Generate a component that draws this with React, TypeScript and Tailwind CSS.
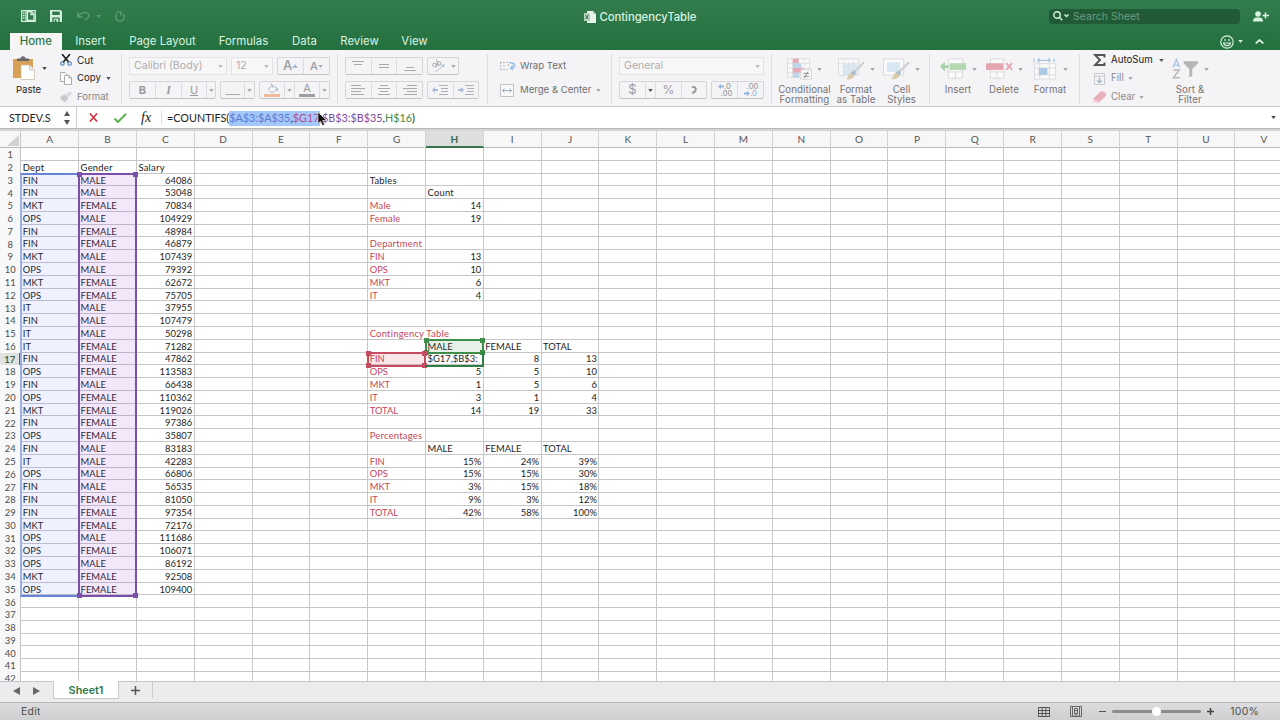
import type { ReactNode } from "react";
import clsx from "clsx";

const GUTTER_W = 21.3;
const COL_W = 57.82;
const ROW_H = 12.795;
const COLUMNS = "ABCDEFGHIJKLMNOPQRSTUV".split("");
const ROWS = Array.from({ length: 42 }, (_, i) => i + 1);

const employees: [string, string, number][] = [
  ["FIN", "MALE", 64086],
  ["FIN", "MALE", 53048],
  ["MKT", "FEMALE", 70834],
  ["OPS", "MALE", 104929],
  ["FIN", "FEMALE", 48984],
  ["FIN", "FEMALE", 46879],
  ["MKT", "MALE", 107439],
  ["OPS", "MALE", 79392],
  ["MKT", "FEMALE", 62672],
  ["OPS", "FEMALE", 75705],
  ["IT", "MALE", 37955],
  ["FIN", "MALE", 107479],
  ["IT", "MALE", 50298],
  ["IT", "FEMALE", 71282],
  ["FIN", "FEMALE", 47862],
  ["OPS", "FEMALE", 113583],
  ["FIN", "MALE", 66438],
  ["OPS", "FEMALE", 110362],
  ["MKT", "FEMALE", 119026],
  ["FIN", "FEMALE", 97386],
  ["OPS", "FEMALE", 35807],
  ["FIN", "MALE", 83183],
  ["IT", "MALE", 42283],
  ["OPS", "MALE", 66806],
  ["FIN", "MALE", 56535],
  ["FIN", "FEMALE", 81050],
  ["FIN", "FEMALE", 97354],
  ["MKT", "FEMALE", 72176],
  ["OPS", "MALE", 111686],
  ["OPS", "FEMALE", 106071],
  ["OPS", "MALE", 86192],
  ["MKT", "FEMALE", 92508],
  ["OPS", "FEMALE", 109400],
];

// columns G..J of the summary area, by row
const summary: Record<number, string[]> = {
  3: ["Tables"],
  4: ["", "Count"],
  5: ["Male", "14"],
  6: ["Female", "19"],
  8: ["Department"],
  9: ["FIN", "13"],
  10: ["OPS", "10"],
  11: ["MKT", "6"],
  12: ["IT", "4"],
  15: ["Contingency Table"],
  16: ["", "MALE", "FEMALE", "TOTAL"],
  17: ["FIN", "$G17,$B$3:", "8", "13"],
  18: ["OPS", "5", "5", "10"],
  19: ["MKT", "1", "5", "6"],
  20: ["IT", "3", "1", "4"],
  21: ["TOTAL", "14", "19", "33"],
  23: ["Percentages"],
  24: ["", "MALE", "FEMALE", "TOTAL"],
  25: ["FIN", "15%", "24%", "39%"],
  26: ["OPS", "15%", "15%", "30%"],
  27: ["MKT", "3%", "15%", "18%"],
  28: ["IT", "9%", "3%", "12%"],
  29: ["TOTAL", "42%", "58%", "100%"],
};

function cellValue(row: number, col: number): string {
  if (col < 3) {
    if (row === 2) return ["Dept", "Gender", "Salary"][col];
    const employee = employees[row - 3];
    return employee ? String(employee[col]) : "";
  }
  return summary[row]?.[col - 6] ?? "";
}

function Caret({ className = "text-[#777]" }: { className?: string }) {
  return (
    <svg viewBox="0 0 6 4" className={clsx("h-[3px] w-[5px] shrink-0", className)}>
      <path d="M0 0h6L3 4z" fill="currentColor" />
    </svg>
  );
}

function TitleBar() {
  return (
    <div className="flex h-8 items-center">
      <div className="flex w-[400px] items-center pl-[21px] text-[#d3f0dc]">
        <svg viewBox="0 0 15 12" className="h-3 w-[15px]" fill="none" stroke="currentColor" strokeWidth="1.3">
          <path d="M.7.7h13.6v10.6H.7zM5 1v10M2 3h1.6M2 5.500h1.600M2 8h1.600" />
          <path d="M6.500 1.500h4l2.500 2.500v6.500h-6.500z" fill="#33774b" />
          <path d="M10 1v3.500h3" />
        </svg>
        <svg viewBox="0 0 13 13" className="ml-[14px] h-3 w-3" fill="currentColor">
          <path fillRule="evenodd" d="M0 0h11.500L13 1.500V13H0zM2.500 1.500v4h8v-4zM2.500 8v5h1.500V9.500h5V13h1.500V8zM5 10.500h2V13H5z" />
        </svg>
        <svg viewBox="0 0 14 10" className="ml-[15px] h-[10px] w-[13px] text-[#5c9b70]" fill="none" stroke="currentColor" strokeWidth="1.6">
          <path d="M1 1v5h5M1.300 5.600C4 1 9.500 0 12 2.500c2 2 .5 4.500-3.500 7" />
        </svg>
        <Caret className="ml-[6px] text-[#5c9b70]" />
        <svg viewBox="0 0 12 12" className="ml-[13px] h-[11px] w-[12px] text-[#5c9b70]" fill="none" stroke="currentColor" strokeWidth="1.6">
          <path d="M3 2.800A4.600 4.600 0 1 0 9.500 3.300M2.500 1h4.500v4" />
        </svg>
      </div>
      <div className="flex w-[480px] items-center justify-center gap-1 pt-[2px] text-[11.300px] font-medium text-[#d9f3e1]">
        <svg viewBox="0 0 12 12" className="mb-px h-3 w-3">
          <path d="M3 0h6l3 3v9H3z" fill="#e6f5ea" />
          <path d="M9 0v3h3" fill="#a6cab2" />
          <path d="M0 2h6v8H0z" fill="#b3d0bc" />
          <path d="M1.500 4l3 4M4.500 4l-3 4" stroke="#3d7c52" />
        </svg>
        <span className="-tracking-[0.050px]">ContingencyTable</span>
      </div>
      <div className="flex flex-1 items-center justify-end pr-[11px] text-[#d9f3e1]">
        <div className="flex h-[15px] w-[191px] items-center rounded-sm bg-[#215b36] pl-1">
          <svg viewBox="0 0 17 10" className="h-[10px] w-[17px]" fill="none" stroke="currentColor" strokeWidth="1.4">
            <circle cx="4" cy="4" r="3.200" />
            <path d="M6.300 6.300l3 3M11.500 3.500l2 2 2-2" />
          </svg>
          <span className="ml-[3px] pt-px text-[10.400px] tracking-[0.080px] text-[#6f9b7d]">Search Sheet</span>
        </div>
        <svg viewBox="0 0 16 11" className="ml-[13px] h-[11px] w-4" fill="currentColor">
          <circle cx="5" cy="3" r="2.800" />
          <path d="M0 10.500C0 7 2 6.500 5 6.500s5 .5 5 4zM11.700 1.500h1.600v2.200H16v1.600h-2.700v2.200h-1.600V5.300H9.500V3.700h2.200z" />
        </svg>
      </div>
    </div>
  );
}

function RibbonTabs() {
  return (
    <div className="flex h-[18px] items-center pt-px pl-[10px] text-[11.400px] text-[#d9f3e1]">
      <div className="flex h-[18px] w-[51.500px] items-center justify-center bg-[#f6f5f6] font-medium text-[#2c7447]">Home</div>
      <div className="w-[58px] text-center">Insert</div>
      <div className="w-[86px] text-center">Page Layout</div>
      <div className="w-[76px] text-center">Formulas</div>
      <div className="w-[46px] text-center">Data</div>
      <div className="w-[64px] text-center">Review</div>
      <div className="w-[46px] text-center">View</div>
      <div className="flex flex-1 items-center justify-end pr-4">
        <svg viewBox="0 0 14 14" className="h-[14px] w-[14px]" fill="none" stroke="currentColor" strokeWidth="1.2">
          <circle cx="7" cy="7" r="6.200" />
          <path d="M3.500 8c1 3.500 6 3.500 7 0zM5 4v2M9 4v2" />
        </svg>
        <Caret className="ml-1" />
        <svg viewBox="0 0 9 5" className="ml-[12px] h-[5px] w-[9px]" fill="none" stroke="currentColor" strokeWidth="1.700">
          <path d="M.7 4.500l3.800-3.500 3.800 3.500" />
        </svg>
      </div>
    </div>
  );
}

function Box({ className, children }: { className?: string; children?: ReactNode }) {
  return (
    <div className={clsx("flex h-[18px] items-stretch divide-x divide-[#dddcde] rounded-[2px] border border-[#d6d5d7] border-b-[#c4c3c6] bg-[#f4f3f5] text-[#9b9b9e]", className)}>
      {children}
    </div>
  );
}

function Cell({ className = "flex-1", children }: { className?: string; children?: ReactNode }) {
  return <div className={clsx("flex items-center justify-center", className)}>{children}</div>;
}

function Select({ className, label }: { className: string; label: string }) {
  return (
    <div className={clsx("flex h-[18px] items-center justify-between border border-[#e3e2e4] bg-[#f8f7f8] pr-[3px] pl-1 text-[10.600px] text-[#aeadb0]", className)}>
      <span className="whitespace-nowrap">{label}</span>
      <Caret className="text-[#b5b4b7]" />
    </div>
  );
}

function Lines({ d }: { d: string }) {
  return (
    <svg viewBox="0 0 16 12" className="h-3 w-4" fill="none" stroke="#a9a9ac">
      <path d={d} />
    </svg>
  );
}

function Group({ className, children }: { className: string; children: ReactNode }) {
  return (
    <div className={clsx("relative shrink-0 after:absolute after:top-1 after:right-0 after:h-[50px] after:w-px after:bg-[#dedddf]", className)}>
      {children}
    </div>
  );
}

function BigButton({ className, icon, label, sub }: { className: string; icon: ReactNode; label: string; sub?: string }) {
  return (
    <div className={clsx("flex flex-col items-center text-[9.700px] leading-[9.600px] tracking-[0.080px] whitespace-nowrap text-[#747476]", className)}>
      <div className="mb-[5px] flex h-[22px] items-center gap-[5px]">
        {icon}
        <Caret className="text-[#a5a5a7]" />
      </div>
      <span>{label}</span>
      {sub && <span>{sub}</span>}
    </div>
  );
}

function BrushTable({ filled }: { filled?: boolean }) {
  return (
    <svg viewBox="0 0 28 22" className="h-[22px] w-[27px]" fill="none">
      <path d="M.5.500h21v17H.5z" fill="#fafafa" stroke="#d8d9db" />
      <path d={filled ? "M4 4h14v10H4z" : "M5 5h15v12H5z"} fill="#d9e7f3" />
      {!filled && <path d="M1 5h20M1 9h20M1 13h20M6 1v16M11 1v16M16 1v16" stroke="#dde1e5" strokeWidth=".7" />}
      <path d="M27 4L16 15" stroke="#cfcfd2" strokeWidth="2.200" />
      <path d="M14.500 15c2 0 3 1.500 2.500 3-.8 2.800-4 4-9 3.500 2-.8 2-2 2.800-3.800.8-1.700 1.900-2.700 3.700-2.700z" fill="#d9cba9" />
      <path d="M13 14.500l3.500-2 2.500 3-2 2z" fill="#a9bdd2" />
    </svg>
  );
}

function Ribbon() {
  return (
    <div className="flex h-[57px] border-b border-[#c9c8ca] bg-[#f4f3f5] text-[10px] text-[#222]">
      <Group className="flex w-[122px]">
        <div className="flex w-[58px] flex-col items-center pt-[6px]">
          <div className="flex h-6 w-full items-center gap-[7px] pl-[13px]">
            <svg viewBox="0 0 22 24" className="h-6 w-[22px]">
              <path d="M0 3h20v19H0z" fill="#d8a153" />
              <path d="M4 5V2.500h3.500C8-.500 12-.500 12.500 2.500H16V5z" fill="#66676b" />
              <path d="M8 9h8.500l5 5v9.500H8z" fill="#fff" stroke="#c9b9a4" strokeWidth=".7" />
              <path d="M16.500 9v5h5" fill="#e8e8e8" stroke="#bbb" strokeWidth=".7" />
            </svg>
            <Caret className="text-[#444]" />
          </div>
          <span className="mt-[3px] pr-px text-[9.600px]">Paste</span>
        </div>
        <div className="flex flex-col pt-px pl-[2px]">
          <div className="flex h-[18px] items-center gap-[5px]">
            <svg viewBox="0 0 12 12" className="h-3 w-3" fill="none">
              <path d="M2 0l7 8.500M10 0L3 8.500" stroke="#222" strokeWidth="1.700" />
              <circle cx="2.400" cy="9.500" r="1.800" stroke="#4b80bc" strokeWidth="1.100" />
              <circle cx="9.600" cy="9.500" r="1.800" stroke="#4b80bc" strokeWidth="1.100" />
            </svg>
            Cut
          </div>
          <div className="flex h-[19px] items-center gap-[5px] text-[9.600px]">
            <svg viewBox="0 0 12 13" className="h-[13px] w-3" fill="#fafafa" stroke="#a5a5a8" strokeWidth=".9">
              <path d="M.500.500h4.500l2 2v7H.500z" />
              <path d="M4.500 3.500h4.500L11.500 6v6.500h-7zM9 3.500V6h2.500" />
            </svg>
            Copy
            <Caret className="text-[#555]" />
          </div>
          <div className="flex h-[18px] items-center gap-[5px] text-[9.600px] text-[#88888a]">
            <svg viewBox="0 0 13 12" className="h-3 w-3">
              <path d="M0 6l5-3 4 4-3 4.500C3 11 1 9 0 6z" fill="#c8c7ca" />
              <path d="M6 3l5-3 2 2-3.500 4.500z" fill="#dadadd" />
            </svg>
            Format
          </div>
        </div>
      </Group>

      <Group className="flex w-[216px] flex-col gap-[6px] pt-[7px] pl-[7px]">
        <div className="flex gap-1">
          <Select className="w-[98px]" label="Calibri (Body)" />
          <Select className="w-[42px]" label="12" />
          <Box className="w-[53px]">
            <Cell>
              <span className="text-[13px] font-medium">A</span>
              <svg viewBox="0 0 6 4" className="h-1 w-[6px]"><path d="M0 4h6L3 0z" fill="#a9bbd6" /></svg>
            </Cell>
            <Cell>
              <span className="text-[11px] font-medium">A</span>
              <Caret className="text-[#aab0bb]" />
            </Cell>
          </Box>
        </div>
        <div className="flex gap-1">
          <Box className="w-[87px] text-[11px]">
            <Cell className="w-[26px] font-bold">B</Cell>
            <Cell className="w-[26px] font-['Liberation_Serif',serif] text-[12px] font-bold italic">I</Cell>
            <Cell className="w-[25px] underline">U</Cell>
            <Cell><Caret className="text-[#aaa]" /></Cell>
          </Box>
          <Box className="w-[35px]">
            <Cell className="w-[24px]"><Lines d="M1 10.500h14" /></Cell>
            <Cell><Caret className="text-[#aaa]" /></Cell>
          </Box>
          <Box className="w-[71px]">
            <Cell className="w-[25px]">
              <svg viewBox="0 0 16 16" className="h-4 w-4">
                <path d="M0 12h16v3H0z" fill="#efb99b" />
                <path d="M4 7l5-4 4 4-5 4zM7 1l2 5" fill="#f7f7f7" stroke="#b0bccb" />
                <path d="M12 5c2 1 2.500 3 2 5l-2-2z" fill="#a9c3df" />
              </svg>
            </Cell>
            <Cell className="w-[10px]"><Caret className="text-[#aaa]" /></Cell>
            <Cell className="w-[25px] flex-col">
              <span className="text-[11px] leading-[11px]">A</span>
              <span className="h-[3px] w-[16px] bg-[#9d9da0]" />
            </Cell>
            <Cell><Caret className="text-[#aaa]" /></Cell>
          </Box>
        </div>
      </Group>

      <Group className="flex w-[150px] flex-col gap-[6px] pt-[7px] pl-[7px]">
        <div className="flex gap-1">
          <Box className="w-[78px]">
            <Cell><Lines d="M2 1.500h12M4 4.500h8" /></Cell>
            <Cell><Lines d="M3 4.500h10M3 7.500h10" /></Cell>
            <Cell><Lines d="M4 7.500h8M2 10.500h12" /></Cell>
          </Box>
          <Box className="w-[32px] divide-x-0">
            <Cell className="flex-1 gap-1">
              <svg viewBox="0 0 16 14" className="h-[14px] w-4" fill="none" stroke="#a9a9ac">
                <circle cx="3.500" cy="6" r="1.800" />
                <circle cx="8" cy="4.500" r="1.800" />
                <path d="M5.500 4.500v4M5.500.500l2 6" />
                <path d="M4 13l8-6M10 6.500l3.500-1-1.500 3" stroke="#b3c2dc" />
              </svg>
              <Caret className="text-[#aaa]" />
            </Cell>
          </Box>
        </div>
        <div className="flex gap-1">
          <Box className="w-[78px]">
            <Cell><Lines d="M1 1.500h10M1 4.500h14M1 7.500h10M1 10.500h13" /></Cell>
            <Cell><Lines d="M4 1.500h8M2 4.500h12M4 7.500h8M2 10.500h12" /></Cell>
            <Cell><Lines d="M5 1.500h10M1 4.500h14M5 7.500h10M2 10.500h13" /></Cell>
          </Box>
          <Box className="w-[52px]">
            {["M0 6l3-3v2h3v2h-3v2z", "M6 6l-3-3v2h-3v2h3v2z"].map((arrow) => (
              <Cell key={arrow}>
                <svg viewBox="0 0 16 12" className="h-3 w-4">
                  <path d={arrow} fill="#a4bbdc" />
                  <path d="M7 1.500h9M9 4.500h7M9 7.500h7M7 10.500h9" stroke="#b1b1b4" />
                </svg>
              </Cell>
            ))}
          </Box>
        </div>
      </Group>

      <Group className="flex w-[124px] flex-col pt-1 pl-[11px] text-[9.600px] text-[#6f6f71]">
        <div className="flex h-6 items-center gap-1">
          <svg viewBox="0 0 17 12" className="h-3 w-[17px]" fill="none" stroke="#bcbcbf">
            <path d="M1 2.500h11M1 9.500h8M1.500 2v8M4 6h3M9.500 6V3" strokeDasharray="2 1" />
            <path d="M11 3c6-1 6 6 1 5M14 5.500L11.500 8l2.500 2" stroke="#9bbfe5" strokeWidth="1.500" />
          </svg>
          Wrap Text
        </div>
        <div className="flex h-6 items-center gap-1 whitespace-nowrap">
          <svg viewBox="0 0 17 13" className="h-[13px] w-[17px]" fill="none" stroke="#c3c3c6">
            <path d="M1.500.500h13v12h-13z" fill="#f9f9fa" />
            <path d="M4 6.500h8M5.500 4.500l-2 2 2 2M10.500 4.500l2 2-2 2" stroke="#9aa8bc" />
          </svg>
          Merge &amp; Center
          <Caret className="ml-px text-[#aaa]" />
        </div>
      </Group>

      <Group className="flex w-[160px] flex-col gap-[6px] pt-[7px] pl-[7px]">
        <Select className="w-[145px]" label="General" />
        <div className="flex gap-1">
          <Box className="w-[88px]">
            <Cell className="w-[26px] text-[13px]">$</Cell>
            <Cell className="w-[10px]"><Caret className="text-[#555]" /></Cell>
            <Cell className="w-[26px] text-[12px]">%</Cell>
            <Cell>
              <svg viewBox="0 0 6 8" className="h-2 w-[6px]"><path d="M1 1c5-1 5 5 0 6" fill="none" stroke="#99999c" strokeWidth="2" /></svg>
            </Cell>
          </Box>
          <Box className="w-[53px]">
            <Cell className="flex-1 flex-col text-[7.500px] leading-[7px] font-medium">
              <span className="flex items-center">
                <svg viewBox="0 0 6 5" className="h-[5px] w-[6px]"><path d="M0 2.500L3 0v1.500h3v2H3V5z" fill="#94b5dc" /></svg>.0
              </span>
              <span className="pl-[4px]">.00</span>
            </Cell>
            <Cell className="flex-1 flex-col text-[7.500px] leading-[7px] font-medium">
              <span className="pl-[4px]">.00</span>
              <span className="flex items-center text-[#94b5dc]">
                <svg viewBox="0 0 6 5" className="h-[5px] w-[6px]"><path d="M6 2.500L3 0v1.500H0v2h3V5z" fill="#94b5dc" /></svg>.0
              </span>
            </Cell>
          </Box>
        </div>
      </Group>

      <Group className="flex w-[158px] pt-[8px] pl-[5px]">
        <BigButton
          className="w-[55px]"
          label="Conditional"
          sub="Formatting"
          icon={
            <svg viewBox="0 0 26 22" className="h-[22px] w-[25px]" fill="none">
              <path d="M.500.500h23v19H.500z" fill="#fafafa" stroke="#dbdbdd" />
              <path d="M6 1v19M12 1v19M18 1v19M1 5h22M1 10h22M1 15h22" stroke="#e0e0e0" />
              <path d="M6 0h6v5H6zM6 10h11v5H6z" fill="#e6aab5" />
              <path d="M6 5h9v5H6zM6 15h7v5H6z" fill="#bdd3e9" />
              <path d="M14.500 11.500h11v10h-11z" fill="#fafafa" stroke="#d2d2d2" />
              <path d="M17 15.500h6M17 18.500h6M22 13.500l-4 7" stroke="#8c8c8c" />
            </svg>
          }
        />
        <BigButton className="w-[48px]" label="Format" sub="as Table" icon={<BrushTable />} />
        <BigButton className="w-[43px]" label="Cell" sub="Styles" icon={<BrushTable filled />} />
      </Group>

      <Group className="flex w-[150px] pt-[8px] pl-[5px]">
        <BigButton
          className="w-[46px]"
          label="Insert"
          icon={
            <svg viewBox="0 0 28 22" className="h-[22px] w-[27px]">
              <path d="M8.500.500h15v20h-15zM8.500 14h15M16 14v6" fill="#fafafa" stroke="#d8d8da" />
              <path d="M10 5h17v7H10z" fill="#b5d8b3" />
              <path d="M0 8.500l5-5V7h4v3H5v3.500z" fill="#a8d0ac" />
            </svg>
          }
        />
        <BigButton
          className="w-[46px]"
          label="Delete"
          icon={
            <svg viewBox="0 0 28 22" className="h-[22px] w-[27px]">
              <path d="M4.500.500h14v20h-14zM4.500 14h14M11.500 14v6" fill="#fafafa" stroke="#d8d8da" />
              <path d="M0 5h18v7H0z" fill="#e4a7b0" />
              <path d="M21 5l6 7M27 5l-6 7" stroke="#e2a9b2" strokeWidth="2" />
            </svg>
          }
        />
        <BigButton
          className="w-[46px]"
          label="Format"
          icon={
            <svg viewBox="0 0 26 22" className="h-[22px] w-[25px]" fill="none">
              <path d="M1.500 5.500h22v16h-22zM7 6v15M17 6v15M2 10h21M2 17h21" fill="#fafafa" stroke="#dcdcdf" />
              <path d="M6 10h9v7H6z" fill="#a9c8e5" />
              <path d="M1 0v4M22 0v4M5 2h12M7 0L5 2l2 2M16 0l2 2-2 2" stroke="#a9c5df" strokeWidth="1.300" />
            </svg>
          }
        />
      </Group>

      <div className="flex flex-1 pl-[13px] text-[9.700px] text-[#8b8b8e]">
        <div className="flex w-[78px] flex-col pt-px">
          <div className="flex h-[18px] items-center gap-[5px] text-[#222]">
            <svg viewBox="0 0 12 12" className="h-3 w-[13px]" fill="none" stroke="#555" strokeWidth="1.900">
              <path d="M11 3.500V1H1.500l5 5-5 5H11V8.500" />
            </svg>
            AutoSum
            <Caret className="ml-px text-[#555]" />
          </div>
          <div className="flex h-[19px] items-center gap-[5px]">
            <svg viewBox="0 0 13 13" className="h-3 w-[13px]" fill="none" stroke="#c5c5c8">
              <path d="M1 .500h11v12H1zM1 3.500h11" />
              <path d="M6.500 5v5M4 8l2.500 2.500L9 8" stroke="#a0b3ca" strokeWidth="1.300" />
            </svg>
            Fill
            <Caret className="-ml-px text-[#aaa]" />
          </div>
          <div className="flex h-[18px] items-center gap-[5px]">
            <svg viewBox="0 0 13 12" className="h-3 w-[13px]">
              <path d="M0 8l8-8 5 2v3L5 12 0 10z" fill="#e9aebc" />
              <path d="M0 8l5 1.500V12L0 10z" fill="#f3d3da" />
            </svg>
            Clear
            <Caret className="-ml-px text-[#aaa]" />
          </div>
        </div>
        <BigButton
          className="w-[38px] pt-[8px]"
          label="Sort &"
          sub="Filter"
          icon={
            <svg viewBox="0 0 28 22" className="h-[22px] w-[27px]" fill="none" strokeWidth="1.500">
              <path d="M1 9.500L4.500 1 8 9.500M2.300 7h4.500" stroke="#afc8e3" />
              <path d="M1.500 12h6L1.500 20H8" stroke="#b6b6b9" />
              <path d="M12 3h15v2l-6 6v7l-3 2v-9l-6-6z" fill="#b5b5b8" />
            </svg>
          }
        />
      </div>
    </div>
  );
}

function FormulaBar() {
  return (
    <div className="flex h-[21px] items-center bg-white font-[Lato,'Noto_Sans',sans-serif] text-[10.800px] text-[#222]">
      <div className="flex h-full w-[77px] items-center justify-between border-r border-[#cfcfd1] pt-px pr-[6px] pl-[9px]">
        <span>STDEV.S</span>
        <svg viewBox="0 0 6 14" className="h-[14px] w-[6px]" fill="#555">
          <path d="M0 5h6L3 0zM0 9h6l-3 5z" />
        </svg>
      </div>
      <svg viewBox="0 0 10 10" className="ml-[11px] h-[9px] w-[11px]" fill="none" stroke="#cd3540" strokeWidth="1.800">
        <path d="M1 .500l8 9M9 .500l-8 9" />
      </svg>
      <svg viewBox="0 0 13 10" className="ml-[15px] h-[10px] w-[13px]" fill="none" stroke="#5cb552" strokeWidth="2">
        <path d="M.500 5.500L4 9 12 .700" />
      </svg>
      <span className="ml-[14px] flex h-[13px] w-[21px] items-center border-r border-[#ddd] font-['Liberation_Serif',serif] text-[14px] leading-none italic">fx</span>
      <div className="ml-px flex h-full items-center pt-[2px] pl-[4px] whitespace-nowrap">
        <span>=COUNTIFS(</span>
        <span className="flex h-[15px] items-center bg-[#a5c8fb]">
          <span className="text-[#5c79cf]">$A$3:$A$35</span>
          <span>,</span>
          <span className="text-[#b54d86]">$G17</span>
        </span>
        <span>,</span>
        <span className="text-[#7b4ba4]">$B$3:$B$35</span>
        <span>,</span>
        <span className="text-[#3f8a3d]">H$16</span>
        <span>)</span>
      </div>
      <Caret className="mr-[4px] ml-auto text-[#444]" />
    </div>
  );
}

function GridCell({ row, col }: { row: number; col: number }) {
  const value = cellValue(row, col);
  const numeric = /^\d+%?$/.test(value);
  const mixedCase = /[a-z]/.test(value);
  const red = col === 6 && row > 3;
  return (
    <div
      className={clsx(
        "flex shrink-0 items-center border-b border-[#c6c6c8] px-[1.500px] pt-[1.500px] whitespace-nowrap",
        row === 15 && col === 6 ? "" : "border-r",
        numeric ? "justify-end" : "justify-start",
        mixedCase && "tracking-[0.250px]",
        red ? "text-[#c64659]" : "text-[#1d1d1d]"
      )}
      style={{ width: COL_W, height: ROW_H }}
    >
      {value && <span>{value}</span>}
    </div>
  );
}

interface RangeProps {
  col: number;
  row: number;
  cols?: number;
  rows?: number;
  className: string;
  handle?: string;
}

// coloured frame around a referenced range, with a handle on each corner
function RangeFrame({ col, row, cols = 1, rows = 1, className, handle }: RangeProps) {
  return (
    <div
      className={clsx("absolute", className)}
      style={{
        left: GUTTER_W + col * COL_W - 1.5,
        top: (row - 1) * ROW_H - 1,
        width: cols * COL_W + 1.5,
        height: rows * ROW_H + 2,
      }}
    >
      {handle &&
        ["-top-[3px] -left-[3px]", "-top-[3px] -right-[3px]", "-bottom-[3px] -left-[3px]", "-bottom-[3px] -right-[3px]"].map((corner) => (
          <span key={corner} className={clsx("absolute h-[5px] w-[5px]", handle, corner)} />
        ))}
    </div>
  );
}

function Sheet() {
  return (
    <div className="h-[550px] overflow-hidden bg-white font-[Lato,'Noto_Sans',sans-serif]">
      <div className="flex h-[17px] w-[1340px] border-b border-[#b9b9bb] bg-[#f7f7f8] text-[10px] text-[#555]">
        <div className="flex shrink-0 items-end justify-end border-r border-[#c8c8ca] p-px" style={{ width: GUTTER_W }}>
          <svg viewBox="0 0 12 11" className="h-[11px] w-3"><path d="M12 0v11H0z" fill="#d2d2d4" /></svg>
        </div>
        {COLUMNS.map((name) => (
          <div
            key={name}
            className={clsx(
              "flex h-[17px] shrink-0 items-center justify-center border-r border-[#d4d4d6]",
              name === "H" && "border-b-2 border-b-[#38774d] bg-[#dcdfdd] pt-[2px] font-bold text-[#38684a]"
            )}
            style={{ width: COL_W }}
          >
            {name}
          </div>
        ))}
      </div>
      <div className="relative w-[1340px] text-[9.400px] leading-none">
        {ROWS.map((row) => (
          <div key={row} className="flex">
            <div
              className={clsx(
                "flex shrink-0 items-center justify-center border-r pt-px",
                row === 17
                  ? "border-r-2 border-[#38774d] bg-[#dfe3e0] font-bold text-[#38684a]"
                  : "border-[#c4c4c6] bg-[#f8f8f9] text-[#4c4c4c]"
              )}
              style={{ width: GUTTER_W, height: ROW_H }}
            >
              {row}
            </div>
            {COLUMNS.map((name, col) => (
              <GridCell key={name} row={row} col={col} />
            ))}
          </div>
        ))}
        <RangeFrame col={0} row={3} rows={33} className="border-2 border-r-0 border-[#6684d6] border-l-[#9fb0e0] bg-[#5064f0]/9" />
        <RangeFrame col={1} row={3} rows={33} className="border-2 border-[#7c50a8] bg-[#a050dc]/13" handle="bg-[#7c50a8]" />
        <RangeFrame col={7} row={16} className="border-2 border-[#3e8e49] bg-[#3e8e49]/12" handle="bg-[#3e8e49]" />
        <RangeFrame col={6} row={17} className="border-2 border-[#c64c61] bg-[#dc3c50]/12" handle="bg-[#c64c61]" />
        <RangeFrame col={7} row={17} className="border-2 border-t-0 border-l-0 border-[#2f7d40]" />
      </div>
    </div>
  );
}

function SheetTabs() {
  return (
    <div className="flex h-[21px] items-start border-t border-[#c5c5c7] bg-[#ececee] text-[#666]">
      <div className="flex h-[18px] w-[53px] items-center gap-[13px] pl-[13px]">
        <svg viewBox="0 0 7 8" className="h-2 w-[7px]" fill="currentColor"><path d="M7 0v8L0 4z" /></svg>
        <svg viewBox="0 0 7 8" className="h-2 w-[7px]" fill="currentColor"><path d="M0 0v8l7-4z" /></svg>
      </div>
      <div className="-mt-px flex h-[18px] w-[66px] items-center justify-center border border-t-0 border-[#c9c9cb] bg-white pt-[3px] text-[10.800px] font-semibold text-[#2f7849]">
        Sheet1
      </div>
      <div className="flex h-[16px] w-[34px] items-center justify-center border-r border-[#cbcbcd]">
        <svg viewBox="0 0 9 9" className="h-[9px] w-[9px]" stroke="#555" strokeWidth="1.500"><path d="M4.500 0v9M0 4.500h9" /></svg>
      </div>
    </div>
  );
}

function StatusBar() {
  return (
    <div className="flex h-[18px] items-center border-t border-[#b5b5b8] bg-linear-to-b from-[#dcdbdd] to-[#cfced0] pl-[21px] text-[10.500px] text-[#505052]">
      <span className="pt-px tracking-[0.200px]">Edit</span>
      <div className="ml-auto flex items-center pr-[21px]">
        <svg viewBox="0 0 12 10" className="h-[10px] w-3" fill="none" stroke="#555">
          <path d="M.500.500h11v9H.500zM.500 3.500h11M.500 6.500h11M4.200.500v9M7.800.500v9" />
        </svg>
        <svg viewBox="0 0 12 11" className="ml-5 h-[11px] w-3" fill="none" stroke="#666">
          <path d="M.500.500h11v10H.500zM2.500 1v9M9.500 1v9M4.500 2.500h3v5h-3zM4 9h4M5 4.500h2" />
        </svg>
        <span className="ml-[17px] h-[1.500px] w-[7px] bg-[#555]" />
        <div className="relative ml-[6px] h-[3px] w-[89px] rounded-full bg-[#8c8c8e]">
          <span className="absolute -top-[3px] left-[40px] h-[9px] w-[9px] rounded-full bg-white" />
        </div>
        <svg viewBox="0 0 7 7" className="ml-[6px] h-[7px] w-[7px]" stroke="#444" strokeWidth="1.500"><path d="M3.500 0v7M0 3.500h7" /></svg>
        <span className="ml-[16px] pt-px tracking-[0.200px]">100%</span>
      </div>
    </div>
  );
}

export default function App() {
  return (
    <div className="relative flex h-[720px] w-[1280px] flex-col overflow-hidden bg-[#c9c9cb] font-[Inter,'Noto_Sans',sans-serif]">
      <header className="h-[50px] bg-linear-to-b from-[#337c4d] to-[#23703f]">
        <TitleBar />
        <RibbonTabs />
      </header>
      <Ribbon />
      <FormulaBar />
      <div className="h-[3px] shrink-0 border-t border-[#b8b8ba] bg-[#d5d5d7]" />
      <Sheet />
      <SheetTabs />
      <StatusBar />
      <svg viewBox="0 0 10 15" className="absolute top-[112px] left-[317px] h-[15px] w-[10px]">
        <path d="M1 0v11.500l2.700-2.300 1.800 4.300 2-.9-1.800-4.100H9.500z" fill="#111" stroke="#eee" strokeWidth=".6" />
      </svg>
    </div>
  );
}
